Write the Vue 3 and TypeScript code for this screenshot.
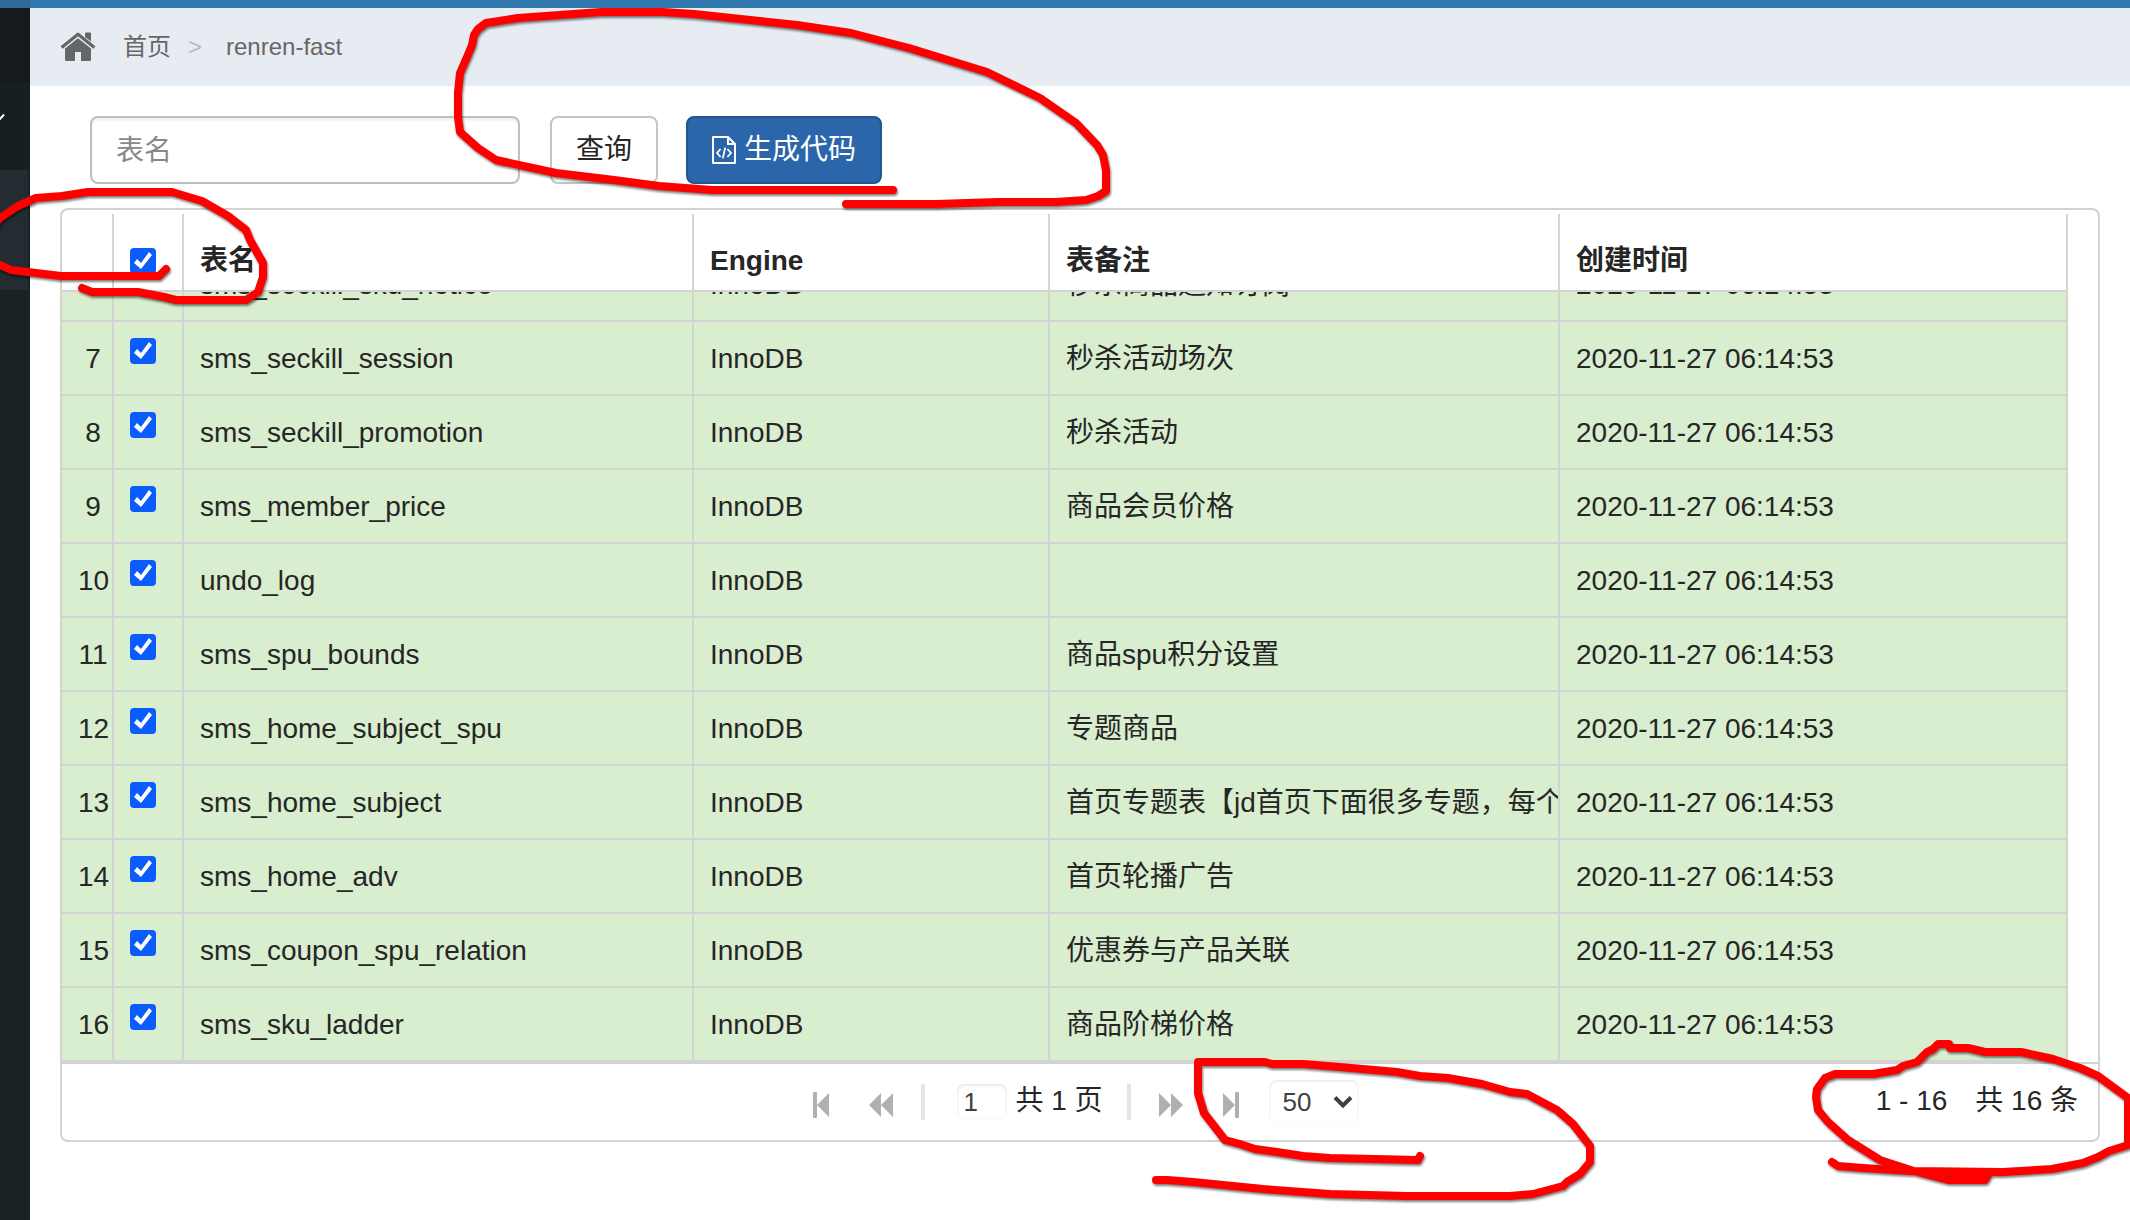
<script setup lang="ts">
import { computed, ref } from 'vue'

interface TableRow {
  no: number
  name: string
  engine: string
  comment: string
  created: string
  checked: boolean
}

const created = '2020-11-27 06:14:53'

const source: [number, string, string][] = [
  [6, 'sms_seckill_sku_notice', '秒杀商品通知订阅'],
  [7, 'sms_seckill_session', '秒杀活动场次'],
  [8, 'sms_seckill_promotion', '秒杀活动'],
  [9, 'sms_member_price', '商品会员价格'],
  [10, 'undo_log', ''],
  [11, 'sms_spu_bounds', '商品spu积分设置'],
  [12, 'sms_home_subject_spu', '专题商品'],
  [13, 'sms_home_subject', '首页专题表【jd首页下面很多专题，每个'],
  [14, 'sms_home_adv', '首页轮播广告'],
  [15, 'sms_coupon_spu_relation', '优惠券与产品关联'],
  [16, 'sms_sku_ladder', '商品阶梯价格'],
]

const rows = ref<TableRow[]>(
  source.map(([no, name, comment]) => ({ no, name, engine: 'InnoDB', comment, created, checked: true })),
)

const allChecked = computed<boolean>({
  get: () => rows.value.every((row) => row.checked),
  set: (value) => rows.value.forEach((row) => (row.checked = value)),
})

const keyword = ref('')
const page = ref('1')
const pageSize = ref('50')

// Hand-drawn marker strokes laid over the page
const strokes: string[] = [
  '893,190 712,190 659,186 614,180 556,173 496,160 478,148 460,132 458,117 458,93 460,73 467,57 472,45 474,35 478,29 486,23 518,18 601,12 663,12 694,14 797,25 851,33 909,48 987,72 1040,98 1076,123 1097,145 1103,155 1106,170 1106,191 1098,196 1086,200 1056,202 998,202 936,204 846,204',
  '166,269 159,276 61,276 11,270 -6,262 -20,240 0,218 18,206 36,198 62,196 88,192 172,192 202,201 228,216 246,230 250,240 263,263 263,277 258,292 246,300 176,300 164,297 138,292 92,292 82,288',
  '1420,1156 1418,1160 1330,1158 1303,1156 1277,1152 1255,1149 1240,1144 1225,1140 1204,1113 1198,1093 1198,1062 1265,1062 1272,1064 1303,1064 1340,1067 1397,1072 1420,1076 1448,1078 1482,1084 1510,1092 1527,1094 1557,1110 1573,1124 1590,1146 1590,1162 1580,1174 1567,1182 1563,1186 1533,1194 1510,1196 1407,1196 1330,1194 1263,1189 1193,1182 1167,1180 1156,1180',
  '1832,1162 1838,1166 1863,1168 1910,1171 2003,1172 2052,1169 2083,1163 2098,1157 2109,1151 2128,1145 2128,1098 2098,1076 2080,1068 2053,1059 2021,1052 1985,1052 1968,1048 1950,1048 1949,1044 1938,1044 1933,1049 1927,1052 1917,1062 1903,1066 1897,1070 1873,1074 1835,1074 1825,1078 1817,1089 1816,1097 1818,1110 1828,1122 1848,1140 1880,1160 1917,1172 1948,1180 1985,1180 1988,1175 1940,1175',
]
</script>

<template>
  <div class="app">
    <header class="topbar"><span class="topbar-logo"></span></header>
    <div class="body">
      <aside class="sidebar">
        <div class="side-head"></div>
        <div class="side-group">
          <svg class="side-arrow" width="5" height="6" viewBox="0 0 5 6" aria-hidden="true">
            <path d="M-2 2 L0 5 L4 0.5" fill="none" stroke="#fff" stroke-width="2" />
          </svg>
        </div>
        <div class="side-active"></div>
      </aside>

      <main class="main">
        <nav class="breadcrumb" aria-label="breadcrumb">
          <svg class="home" width="36" height="29" viewBox="0 0 36 29" aria-hidden="true">
            <path d="M25 1.2Q25 .4 25.8 .4H30.2Q31 .4 31 1.2V9.5L25 5Z" fill="#666" />
            <path d="M1.6 15.4 18 2.2 34.4 15.4" fill="none" stroke="#666" stroke-width="3.2" stroke-linejoin="round" />
            <path d="M5 16.6 18 6.2 31 16.6V27.4Q31 29 29.4 29H21V20H15V29H6.6Q5 29 5 27.4Z" fill="#666" />
          </svg>
          <a href="#" class="crumb">首页</a>
          <span class="crumb-sep">&gt;</span>
          <span>renren-fast</span>
        </nav>

        <div class="content">
          <form class="toolbar" @submit.prevent>
            <input v-model="keyword" class="search" type="text" placeholder="表名" aria-label="表名" />
            <button type="button" class="btn">查询</button>
            <button type="button" class="btn btn-primary">
              <svg width="24" height="28" viewBox="0 0 24 28" fill="none" stroke="#fff" stroke-width="2" aria-hidden="true">
                <path d="M1 1H16L23 8V27H1Z" stroke-linejoin="round" />
                <path d="M16 1V8H23" />
                <path d="M8.6 13 5 17 8.6 21M15.4 13 19 17 15.4 21M13.2 11.6 10.8 22.4" stroke-width="1.8" />
              </svg>
              生成代码
            </button>
          </form>

          <section class="panel">
            <div class="grid">
              <table class="table head">
                <colgroup>
                  <col class="c-no" /><col class="c-check" /><col class="c-name" /><col class="c-engine" /><col class="c-comment" /><col />
                </colgroup>
                <thead>
                  <tr>
                    <th></th>
                    <th class="check"><input v-model="allChecked" type="checkbox" aria-label="全选" /></th>
                    <th>表名</th>
                    <th>Engine</th>
                    <th>表备注</th>
                    <th>创建时间</th>
                  </tr>
                </thead>
              </table>
              <div class="viewport">
                <table class="table rows">
                  <colgroup>
                    <col class="c-no" /><col class="c-check" /><col class="c-name" /><col class="c-engine" /><col class="c-comment" /><col />
                  </colgroup>
                  <tbody>
                    <tr v-for="row in rows" :key="row.no">
                      <td class="no">{{ row.no }}</td>
                      <td class="check"><input v-model="row.checked" type="checkbox" :aria-label="row.name" /></td>
                      <td>{{ row.name }}</td>
                      <td>{{ row.engine }}</td>
                      <td>{{ row.comment }}</td>
                      <td>{{ row.created }}</td>
                    </tr>
                  </tbody>
                </table>
              </div>
            </div>

            <footer class="pager">
              <div class="pager-center">
                <div class="pager-nav">
                  <button type="button" class="nav" aria-label="首页">
                    <svg width="18" height="26" viewBox="0 0 18 26" fill="#b0b0b0"><rect x="1" y="0" width="4" height="26" rx="1" /><path d="M17 1V25L5 13Z" /></svg>
                  </button>
                  <button type="button" class="nav" aria-label="上一页">
                    <svg width="26" height="26" viewBox="0 0 26 26" fill="#b0b0b0"><path d="M13 1V25L1 13ZM25 1V25L13 13Z" /></svg>
                  </button>
                </div>
                <span class="bar"></span>
                <label class="page-field">
                  <input v-model="page" class="page" type="text" aria-label="页码" />
                  <span class="pager-text">共 1 页</span>
                </label>
                <span class="bar"></span>
                <div class="pager-nav">
                  <button type="button" class="nav" aria-label="下一页">
                    <svg width="26" height="26" viewBox="0 0 26 26" fill="#b0b0b0"><path d="M1 1V25L13 13ZM13 1V25L25 13Z" /></svg>
                  </button>
                  <button type="button" class="nav" aria-label="末页">
                    <svg width="18" height="26" viewBox="0 0 18 26" fill="#b0b0b0"><rect x="13" y="0" width="4" height="26" rx="1" /><path d="M1 1V25L13 13Z" /></svg>
                  </button>
                </div>
                <div class="size-box">
                  <select v-model="pageSize" class="size" aria-label="每页条数">
                    <option>50</option>
                  </select>
                  <svg class="size-arrow" width="20" height="14" viewBox="0 0 20 14" aria-hidden="true">
                    <path d="M2 2.5 10 10.5 18 2.5" fill="none" stroke="#404040" stroke-width="4" />
                  </svg>
                </div>
              </div>
              <div class="pager-info pager-text">
                <span>1 - 16</span>
                <span>共 16 条</span>
              </div>
            </footer>
          </section>
        </div>
      </main>
    </div>

    <svg class="marker" width="2130" height="1220" viewBox="0 0 2130 1220" aria-hidden="true">
      <polyline v-for="(points, i) in strokes" :key="i" :points="points" />
    </svg>
  </div>
</template>

<style>
body {
  margin: 0;
}
</style>

<style scoped>
* {
  box-sizing: border-box;
}
.app {
  position: relative;
  display: flex;
  flex-direction: column;
  min-height: 100vh;
  overflow: hidden;
  background: #fff;
  color: #262626;
  font-family: 'Liberation Sans', 'Noto Sans CJK SC', sans-serif;
  font-size: 28px;
}
input,
select,
button {
  margin: 0;
  font-family: inherit;
  font-size: 28px;
  color: inherit;
}
.topbar {
  height: 8px;
  background: #3178af;
}
.topbar-logo {
  display: block;
  width: 30px;
  height: 8px;
  background: #2d6b98;
}
.body {
  display: flex;
  flex: 1;
}
.sidebar {
  flex: none;
  width: 30px;
  background: #1b2225;
}
.side-head {
  height: 74px;
  background: #161a1d;
}
.side-group {
  height: 88px;
  padding-top: 32px;
  background: #181f21;
}
.side-arrow {
  display: block;
}
.side-active {
  width: 28px;
  height: 120px;
  background: #222c31;
}
.main {
  flex: 1;
  min-width: 0;
}
.breadcrumb {
  display: flex;
  align-items: center;
  height: 78px;
  padding: 0 30px;
  background: #e7ebf2;
  color: #666;
  font-size: 24px;
  line-height: 32px;
}
.home {
  margin: 0 27px 2px 0;
}
.crumb {
  color: inherit;
  text-decoration: none;
}
.crumb-sep {
  margin: 0 24px 0 17px;
  color: #bbb;
}
.content {
  padding: 30px;
}
.toolbar {
  display: flex;
  gap: 28px;
  margin: 0 0 24px 30px;
}
.search {
  width: 430px;
  height: 68px;
  margin-right: 2px;
  padding: 2px 24px 0;
  border: 2px solid #bfbfbf;
  border-radius: 8px;
  background: #fff;
  box-shadow: inset 0 2px 3px rgba(0, 0, 0, 0.08);
}
.search::placeholder {
  color: #888;
  opacity: 1;
}
.btn {
  display: flex;
  align-items: center;
  gap: 8px;
  height: 68px;
  padding: 0 24px;
  border: 2px solid #c4c4c4;
  border-radius: 8px;
  background: #fff;
  line-height: 32px;
  white-space: nowrap;
}
.btn-primary {
  border-color: #23558f;
  background: #2b65aa;
  color: #fff;
}
.panel {
  border: 2px solid #d3d3d3;
  border-radius: 8px;
}
.grid {
  margin-right: 30px;
  padding-top: 4px;
}
.table {
  width: 100%;
  table-layout: fixed;
  border-collapse: separate;
  border-spacing: 0;
}
.c-no {
  width: 52px;
}
.c-check {
  width: 70px;
}
.c-name,
.c-comment {
  width: 510px;
}
.c-engine {
  width: 356px;
}
th,
td {
  overflow: hidden;
  padding: 2px 4px 0 16px;
  border-right: 2px solid #d3d3d3;
  border-bottom: 2px solid #d3d3d3;
  text-align: left;
  white-space: nowrap;
}
th {
  height: 78px;
  padding-top: 18px;
  line-height: 58px;
}
td {
  height: 74px;
  line-height: 70px;
}
.no {
  text-align: center;
}
.check input {
  display: block;
  appearance: none;
  width: 26px;
  height: 26px;
  border-radius: 4px;
  background: #fff;
  box-shadow: inset 0 0 0 2px #767676;
}
.check input:checked {
  background: #0a5cff;
  box-shadow: none;
}
.check input:checked::before {
  content: '';
  display: block;
  width: 26px;
  height: 26px;
  background: #fff;
  clip-path: polygon(4px 15px, 7px 11px, 11px 15px, 19px 4px, 22px 7px, 11px 21px);
}
td.check {
  padding-top: 16px;
  vertical-align: top;
}
.viewport {
  display: flex;
  flex-direction: column;
  justify-content: flex-end;
  height: 770px;
  overflow: hidden;
}
.rows {
  flex: none;
  background: #d9edcf;
}
.pager {
  display: grid;
  grid-template-columns: 1fr auto 1fr;
  align-items: center;
  height: 78px;
  border-top: 2px solid #d3d3d3;
}
.pager-center {
  grid-column: 2;
  display: flex;
  align-items: center;
  gap: 22px;
  padding-left: 4px;
  white-space: nowrap;
}
.pager-nav {
  display: flex;
  gap: 28px;
  padding-top: 6px;
}
.nav {
  display: flex;
  align-items: center;
  justify-content: center;
  width: 32px;
  height: 32px;
  padding: 0;
  border: 0;
  background: none;
}
.bar {
  width: 4px;
  height: 36px;
  margin: 0 2px;
  background: #e5e5e5;
}
.page-field {
  display: flex;
  align-items: center;
  gap: 8px;
  padding-left: 8px;
}
.page {
  width: 50px;
  height: 36px;
  padding: 0 6px;
  border: 0;
  border-radius: 8px;
  background: #fff;
  box-shadow: inset 0 1px 3px rgba(0, 0, 0, 0.14);
  color: #404040;
  font-size: 26px;
}
.pager-text {
  padding-bottom: 2px;
  line-height: 32px;
}
.size-box {
  position: relative;
  width: 90px;
}
.size {
  display: block;
  appearance: none;
  width: 90px;
  height: 44px;
  padding: 0 14px;
  border: 0;
  border-radius: 8px;
  background: #fff;
  box-shadow: inset 0 1px 3px rgba(0, 0, 0, 0.12);
  color: #404040;
  font-size: 26px;
}
.size-arrow {
  position: absolute;
  top: 15px;
  right: 6px;
  pointer-events: none;
}
.pager-info {
  display: flex;
  justify-content: flex-end;
  gap: 28px;
  padding-right: 20px;
}
.marker {
  position: absolute;
  top: 0;
  left: 0;
  pointer-events: none;
}
.marker polyline {
  fill: none;
  stroke: #f00;
  stroke-width: 8px;
  stroke-linecap: round;
  stroke-linejoin: round;
  filter: drop-shadow(1px 2px 1px rgba(0, 0, 0, 0.5));
}
</style>
